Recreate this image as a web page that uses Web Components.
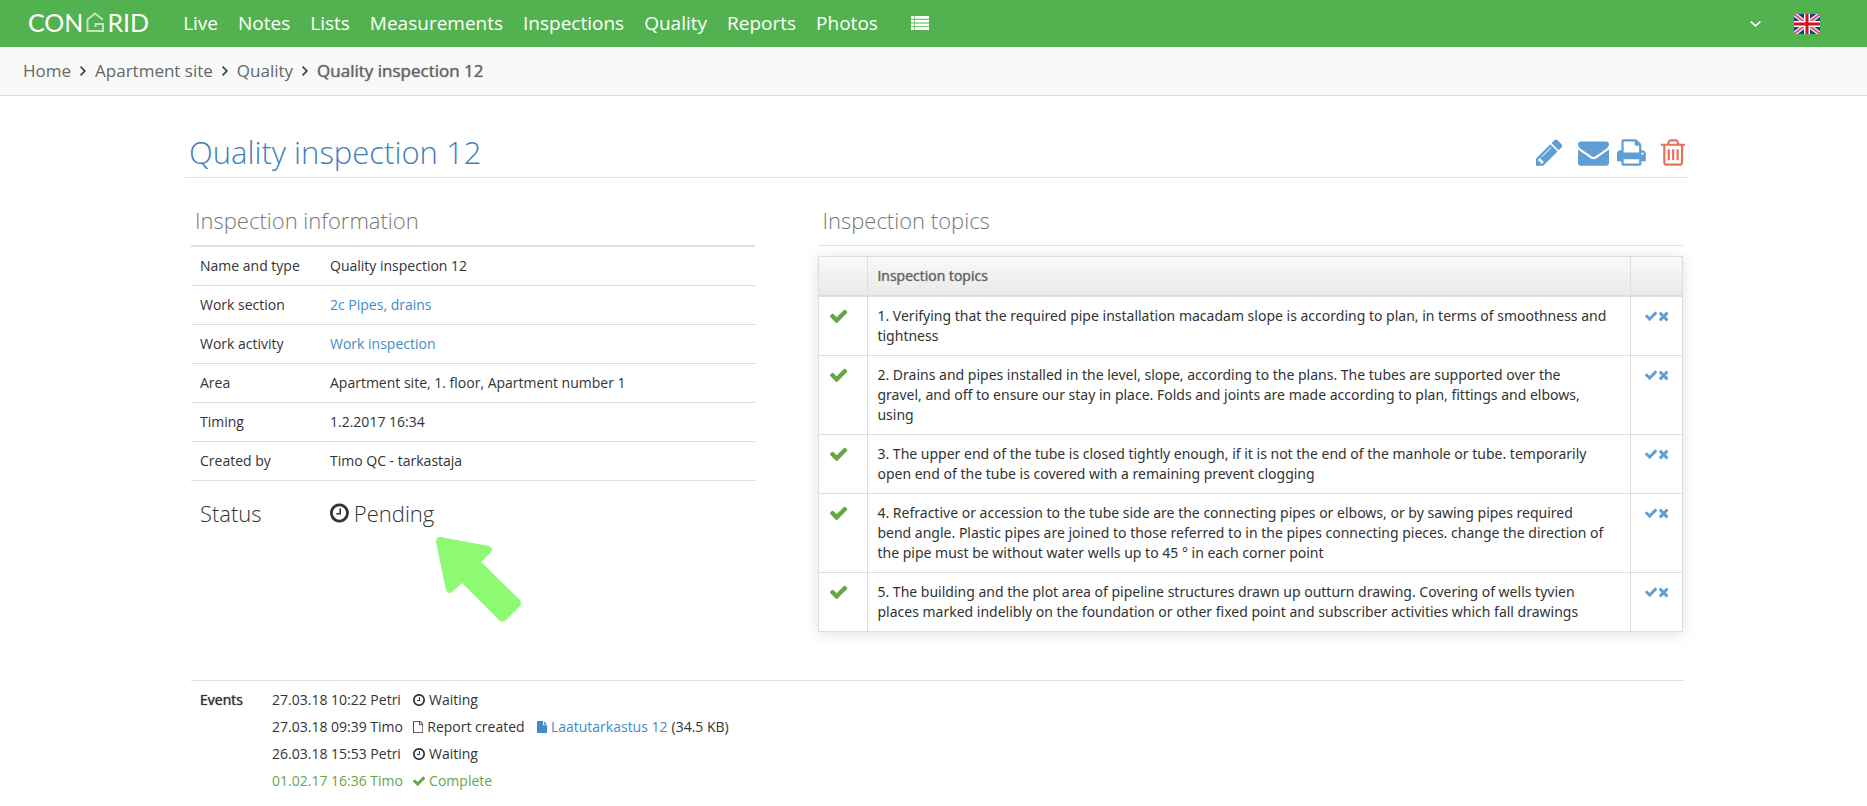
<!DOCTYPE html>
<html lang="en">
<head>
<meta charset="utf-8">
<title>Quality inspection 12</title>
<style>
    body {
        margin: 0;
        background-color: #fff;
        color: #333;
        font-family: 'Open Sans', 'Noto Sans', sans-serif;
        font-size: 14px;
        line-height: 20px;
    }

    main {
        padding: 36px 178px 16px 185px;
    }

    .columns {
        display: grid;
        grid-template-columns: 395fr 605fr;
        gap: 63px;
        margin: 27px 6px 48px;
    }

    event-log {
        margin: 0 6px;
    }
</style>
</head>
<body>
<site-header></site-header>
<bread-crumbs></bread-crumbs>
<main>
    <page-title>Quality inspection 12</page-title>
    <div class="columns">
        <page-section>
            <span slot="heading">Inspection information</span>
            <info-table></info-table>
        </page-section>
        <page-section>
            <span slot="heading">Inspection topics</span>
            <topics-table></topics-table>
        </page-section>
    </div>
    <event-log></event-log>
</main>

<script>
const icons = {
    check: ['121 0 1550 1792', 'M1671 566q0 40-28 68l-724 724-136 136q-28 28-68 28t-68-28l-136-136-362-362q-28-28-28-68t28-68l136-136q28-28 68-28t68 28l294 295 656-657q28-28 68-28t68 28l136 136q28 28 28 68z'],
    times: ['302 0 1188 1792', 'M1490 1322q0 40-28 68l-136 136q-28 28-68 28t-68-28l-294-294-294 294q-28 28-68 28t-68-28l-136-136q-28-28-28-68t28-68l294-294-294-294q-28-28-28-68t28-68l136-136q28-28 68-28t68 28l294 294 294-294q28-28 68-28t68 28l136 136q28 28 28 68t-28 68l-294 294 294 294q28 28 28 68z'],
    pencil: ['128 0 1536 1792', 'M491 1536l91-91-235-235-91 91v107h128v128h107zm523-928q0-22-22-22-10 0-17 7l-542 542q-7 7-7 17 0 22 22 22 10 0 17-7l542-542q7-7 7-17zm-54-192l416 416-832 832h-416v-416zm683 96q0 53-37 90l-166 166-416-416 166-165q36-38 90-38 53 0 91 38l235 234q37 39 37 91z'],
    envelope: ['0 0 1792 1792', 'M1792 710v794q0 66-47 113t-113 47h-1472q-66 0-113-47t-47-113v-794q44 49 101 87 362 246 497 345 57 42 92.5 65.5t94.5 48 110 24.5h2q51 0 110-24.5t94.5-48 92.5-65.5q170-123 498-345 57-39 100-87zm0-294q0 79-49 151t-122 123q-376 261-468 325-10 7-42.5 31t-54 38.5-52 32.5-57.5 27-50 9h-2q-23 0-50-9t-57.5-27-52-32.5-54-38.5-42.5-31q-91-64-262-182.5t-205-142.5q-62-42-117-115.5t-55-136.5q0-78 41.5-130t118.5-52h1472q65 0 112.5 47t47.5 113z'],
    print: ['64 0 1664 1792', 'M448 1536h896v-256h-896v256zm0-640h896v-384h-160q-40 0-68-28t-28-68v-160h-640v640zm1152 64q0-26-19-45t-45-19-45 19-19 45 19 45 45 19 45-19 19-45zm128 0v416q0 13-9.5 22.5t-22.5 9.5h-224v160q0 40-28 68t-68 28h-960q-40 0-68-28t-28-68v-160h-224q-13 0-22.5-9.5t-9.5-22.5v-416q0-79 56.5-135.5t135.5-56.5h64v-544q0-40 28-68t68-28h672q40 0 88 20t76 48l152 152q28 28 48 76t20 88v256h64q79 0 135.5 56.5t56.5 135.5z'],
    trash: ['192 0 1408 1792', 'M704 736v576q0 14-9 23t-23 9h-64q-14 0-23-9t-9-23v-576q0-14 9-23t23-9h64q14 0 23 9t9 23zm256 0v576q0 14-9 23t-23 9h-64q-14 0-23-9t-9-23v-576q0-14 9-23t23-9h64q14 0 23 9t9 23zm256 0v576q0 14-9 23t-23 9h-64q-14 0-23-9t-9-23v-576q0-14 9-23t23-9h64q14 0 23 9t9 23zm128 724v-948h-896v948q0 22 7 40.5t14.5 27 10.5 8.5h832q3 0 10.5-8.5t14.5-27 7-40.5zm-672-1076h448l-48-117q-7-9-17-11h-317q-10 2-17 11zm928 32v64q0 14-9 23t-23 9h-96v948q0 83-47 143.5t-113 60.5h-832q-66 0-113-58.5t-47-141.5v-952h-96q-14 0-23-9t-9-23v-64q0-14 9-23t23-9h309l70-167q15-37 54-63t79-26h320q40 0 79 26t54 63l70 167h309q14 0 23 9t9 23z'],
    clock: ['128 0 1536 1792', 'M1024 544v448q0 14-9 23t-23 9h-320q-14 0-23-9t-9-23v-64q0-14 9-23t23-9h224v-352q0-14 9-23t23-9h64q14 0 23 9t9 23zm416 352q0-148-73-273t-198-198-273-73-273 73-198 198-73 273 73 273 198 198 273 73 273-73 198-198 73-273zm224 0q0 209-103 385.5t-279.5 279.5-385.5 103-385.5-103-279.5-279.5-103-385.5 103-385.5 279.5-279.5 385.5-103 385.5 103 279.5 279.5 103 385.5z'],
    fileOutline: ['128 0 1536 1792', 'M1596 380q28 28 48 76t20 88v1152q0 40-28 68t-68 28h-1344q-40 0-68-28t-28-68v-1600q0-40 28-68t68-28h896q40 0 88 20t76 48zm-444-244v376h376q-10-29-22-41l-313-313q-12-12-41-22zm384 1528v-1024h-416q-40 0-68-28t-28-68v-416h-768v1536h1280z'],
    file: ['128 0 1536 1792', 'M1152 512v-472q22 14 36 28l408 408q14 14 28 36h-472zm-128 32q0 40 28 68t68 28h544v1056q0 40-28 68t-68 28h-1344q-40 0-68-28t-28-68v-1600q0-40 28-68t68-28h800v544z'],
    list: ['0 0 18 14', 'M0 0h3v2.8H0zM3.7 0H18v2.8H3.7zM0 3.7h3v2.8H0zM3.7 3.7H18v2.8H3.7zM0 7.4h3v2.8H0zM3.7 7.4H18v2.8H3.7zM0 11.1h3v2.9H0zM3.7 11.1H18v2.9H3.7z'],
    right: ['0 0 6 10', 'M1.2 0L6 5 1.2 10 0 8.8 3.6 5 0 1.2z'],
    down: ['0 0 11 6', 'M0 1.1L1.2 0l4.3 3.8L9.8 0 11 1.1 5.5 6z']
};

// glyph icon, as high as the font size of its place
class GlyphIcon extends HTMLElement {
    constructor() {
        super();
        this.attachShadow({ mode: 'open' });
    }

    connectedCallback() {
        const [viewBox, path] = icons[this.getAttribute('name')];
        this.shadowRoot.innerHTML = `
        <style>
            :host { display: block; line-height: 0; }
            svg { display: block; height: 1em; fill: currentColor; }
        </style>
        <svg viewBox="${viewBox}" aria-hidden="true"><path d="${path}"/></svg>
        `;
    }
}
customElements.define('glyph-icon', GlyphIcon);

class SiteHeader extends HTMLElement {
    constructor() {
        super();
        this.attachShadow({ mode: 'open' });
    }

    connectedCallback() {
        const links = ['Live', 'Notes', 'Lists', 'Measurements', 'Inspections', 'Quality', 'Reports', 'Photos'];

        this.shadowRoot.innerHTML = `
        <style>
            :host {
                display: flex;
                align-items: center;
                height: 47px;
                padding: 0 47px 0 28px;
                background-color: #53b250;
                color: #fff;
                font-size: 19px;
            }

            a { color: inherit; text-decoration: none; }

            .logo {
                display: flex;
                align-items: center;
                gap: 3px;
                margin-right: 34px;
                padding-bottom: 3px;
                font-family: Lato, sans-serif;
                font-size: 25px;
                line-height: 28px;
            }

            .logo svg { width: 18px; height: 20px; }

            nav {
                display: flex;
                align-items: center;
                gap: 20px;
                flex: 1;
                padding-bottom: 2px;
            }

            nav button { margin-left: 13px; font-size: 14px; }

            button {
                padding: 0;
                border: none;
                background: none;
                color: inherit;
                cursor: pointer;
            }

            .account { margin-right: 33px; font-size: 6px; }
            .language svg { display: block; width: 26px; height: 20px; }
        </style>
        <a class="logo" href="#" aria-label="Congrid">
            <span>CON</span>
            <svg viewBox="0 0 18 20" fill="none" stroke="#fff" stroke-opacity=".65" stroke-width="2">
                <path d="M16 8V7L9 1.5 1.5 7.5V19H17V12H9.500V15"/>
            </svg>
            <span>RID</span>
        </a>
        <nav>
            ${links.map(text => `<a href="#">${text}</a>`).join('')}
            <button aria-label="All lists"><glyph-icon name="list"></glyph-icon></button>
        </nav>
        <button class="account" aria-label="Account"><glyph-icon name="down"></glyph-icon></button>
        <button class="language" aria-label="Language">
            <svg viewBox="0 0 26 20">
                <path fill="#1a3a94" d="M0 0h26v20H0z"/>
                <path stroke="#f4eef2" stroke-width="4.500" d="M0 0l26 20M26 0L0 20"/>
                <path stroke="#dc5560" stroke-width="1.800" d="M0 0l26 20M26 0L0 20"/>
                <path fill="#fff" d="M10 0h6v20h-6zM0 7h26v6H0z"/>
                <path fill="#d6101c" d="M11.500 0h3v20h-3zM0 8.500h26v3H0z"/>
            </svg>
        </button>
        `;
    }
}
customElements.define('site-header', SiteHeader);

class BreadCrumbs extends HTMLElement {
    constructor() {
        super();
        this.attachShadow({ mode: 'open' });
    }

    connectedCallback() {
        const parents = ['Home', 'Apartment site', 'Quality'];

        this.shadowRoot.innerHTML = `
        <style>
            :host {
                display: block;
                padding: 0 23px;
                background-color: #f9f9f9;
                border-bottom: 1px solid #ddd;
                color: #666;
                font-size: 17px;
                line-height: 48px;
            }

            nav { display: flex; align-items: center; gap: 9px; }
            a { color: inherit; text-decoration: none; }
            glyph-icon { color: #444; font-size: 10px; }
            .current { text-shadow: 0 0 1px #666; }
        </style>
        <nav aria-label="Breadcrumb">
            ${parents.map(text => `<a href="#">${text}</a><glyph-icon name="right"></glyph-icon>`).join('')}
            <span class="current" aria-current="page">Quality inspection 12</span>
        </nav>
        `;
    }
}
customElements.define('bread-crumbs', BreadCrumbs);

class PageTitle extends HTMLElement {
    constructor() {
        super();
        this.attachShadow({ mode: 'open' });
    }

    connectedCallback() {
        this.shadowRoot.innerHTML = `
        <style>
            :host {
                display: flex;
                align-items: center;
                justify-content: space-between;
                padding: 0 4px 5px;
                border-bottom: 1px solid #dde5ec;
            }

            h1 {
                margin: 0;
                color: #3f7fb8;
                font-size: 31px;
                font-weight: 300;
                line-height: 40px;
            }

            .actions { display: flex; gap: 15px; }
            .pair { display: flex; gap: 8px; }

            button {
                padding: 0;
                border: none;
                background: none;
                color: #5f9fd6;
                font-size: 31px;
                cursor: pointer;
            }

            .delete { color: #e8705f; }
        </style>
        <h1><slot></slot></h1>
        <div class="actions">
            <button aria-label="Edit"><glyph-icon name="pencil"></glyph-icon></button>
            <div class="pair">
                <button aria-label="Send"><glyph-icon name="envelope"></glyph-icon></button>
                <button aria-label="Print"><glyph-icon name="print"></glyph-icon></button>
            </div>
            <button class="delete" aria-label="Delete"><glyph-icon name="trash"></glyph-icon></button>
        </div>
        `;
    }
}
customElements.define('page-title', PageTitle);

class PageSection extends HTMLElement {
    constructor() {
        super();
        this.attachShadow({ mode: 'open' });
    }

    connectedCallback() {
        this.shadowRoot.innerHTML = `
        <style>
            :host { display: block; }

            h2 {
                margin: 0;
                padding: 0 4px 10px;
                border-bottom: 1px solid #dde5ec;
                color: #777;
                font-size: 22px;
                font-weight: 300;
                line-height: 30px;
            }
        </style>
        <h2><slot name="heading"></slot></h2>
        <slot></slot>
        `;
    }
}
customElements.define('page-section', PageSection);

class InfoTable extends HTMLElement {
    constructor() {
        super();
        this.attachShadow({ mode: 'open' });
    }

    connectedCallback() {
        const rows = [
            { label: 'Name and type', value: 'Quality inspection 12' },
            { label: 'Work section', value: '2c Pipes, drains', link: true },
            { label: 'Work activity', value: 'Work inspection', link: true },
            { label: 'Area', value: 'Apartment site, 1. floor, Apartment number 1' },
            { label: 'Timing', value: '1.2.2017 16:34' },
            { label: 'Created by', value: 'Timo QC - tarkastaja' }
        ];

        this.shadowRoot.innerHTML = `
        <style>
            :host { display: block; }

            table { width: 100%; border-spacing: 0; }

            th, td {
                padding: 9px;
                border-top: 1px solid #ddd;
                font-weight: 400;
                text-align: left;
            }

            th { width: 112px; }
            a { color: #428bca; text-decoration: none; }

            .status th, .status td {
                padding-top: 17px;
                font-size: 22px;
                font-weight: 300;
                line-height: 30px;
            }

            .state { display: flex; align-items: center; gap: 5px; position: relative; }

            /* pointer that lies over the page, below the state */
            .pointer {
                position: absolute;
                left: 105px;
                top: 39px;
                width: 87px;
                height: 86px;
                fill: #8ef972;
            }
        </style>
        <table>
            ${rows.map(row => `
            <tr>
                <th scope="row">${row.label}</th>
                <td>${row.link ? `<a href="#">${row.value}</a>` : row.value}</td>
            </tr>`).join('')}
            <tr class="status">
                <th scope="row">Status</th>
                <td>
                    <div class="state">
                        <glyph-icon name="clock"></glyph-icon>
                        <span>Pending</span>
                        <svg class="pointer" viewBox="0 0 87 86" aria-hidden="true">
                            <path d="M5 0L54 9Q59 11 56 15L46 25 85 63Q87 66 85 69L70 84Q67 86 64 83L27 46 17 55Q13 58 11 53L1 5Q1 0 5 0z"/>
                        </svg>
                    </div>
                </td>
            </tr>
        </table>
        `;
    }
}
customElements.define('info-table', InfoTable);

class TopicsTable extends HTMLElement {
    constructor() {
        super();
        this.attachShadow({ mode: 'open' });
    }

    connectedCallback() {
        const topics = [
            '1. Verifying that the required pipe installation macadam slope is according to plan, in terms of smoothness and\ntightness',
            '2. Drains and pipes installed in the level, slope, according to the plans. The tubes are supported over the\ngravel, and off to ensure our stay in place. Folds and joints are made according to plan, fittings and elbows,\nusing',
            '3. The upper end of the tube is closed tightly enough, if it is not the end of the manhole or tube. temporarily\nopen end of the tube is covered with a remaining prevent clogging',
            '4. Refractive or accession to the tube side are the connecting pipes or elbows, or by sawing pipes required\nbend angle. Plastic pipes are joined to those referred to in the pipes connecting pieces. change the direction of\nthe pipe must be without water wells up to 45 ° in each corner point',
            '5. The building and the plot area of pipeline structures drawn up outturn drawing. Covering of wells tyvien\nplaces marked indelibly on the foundation or other fixed point and subscriber activities which fall drawings'
        ];

        this.shadowRoot.innerHTML = `
        <style>
            :host { display: block; margin-top: 10px; }

            table {
                width: 100%;
                border: 1px solid #ddd;
                border-width: 1px 0 0 1px;
                border-spacing: 0;
                box-shadow: 0 2px 14px rgba(0, 0, 0, 0.12);
            }

            th, td {
                padding: 9px;
                border-right: 1px solid #ddd;
                border-bottom: 1px solid #ddd;
                text-align: left;
                vertical-align: top;
            }

            thead tr { background: linear-gradient(#f9f9f9, #e9e9e9); }

            th {
                border-bottom-width: 2px;
                color: #666;
                font-weight: 400;
                text-shadow: 0 0 1px #666;
            }

            .topic { font-family: 'Noto Sans', sans-serif; white-space: pre-line; }
            .mark { width: 28px; padding-left: 11px; }
            .mark glyph-icon { color: #64a846; font-size: 20px; }
            .choice { width: 24px; padding-left: 14px; padding-right: 13px; }
            .buttons { display: flex; align-items: center; gap: 2px; height: 20px; }

            button {
                padding: 0;
                border: none;
                background: none;
                color: #5f9fd6;
                font-size: 14px;
                cursor: pointer;
            }
        </style>
        <table>
            <thead>
                <tr><th class="mark"></th><th scope="col">Inspection topics</th><th class="choice"></th></tr>
            </thead>
            <tbody>
                ${topics.map(topic => `
                <tr>
                    <td class="mark"><glyph-icon name="check"></glyph-icon></td>
                    <td class="topic">${topic}</td>
                    <td class="choice">
                        <div class="buttons">
                            <button aria-label="Accept"><glyph-icon name="check"></glyph-icon></button>
                            <button aria-label="Reject"><glyph-icon name="times"></glyph-icon></button>
                        </div>
                    </td>
                </tr>`).join('')}
            </tbody>
        </table>
        `;
    }
}
customElements.define('topics-table', TopicsTable);

class EventLog extends HTMLElement {
    constructor() {
        super();
        this.attachShadow({ mode: 'open' });
    }

    connectedCallback() {
        const events = [
            { when: '27.03.18 10:22 Petri', icon: 'clock', text: 'Waiting' },
            { when: '27.03.18 09:39 Timo', icon: 'fileOutline', text: 'Report created', file: 'Laatutarkastus 12', size: '(34.5 KB)' },
            { when: '26.03.18 15:53 Petri', icon: 'clock', text: 'Waiting' },
            { when: '01.02.17 16:36 Timo', icon: 'check', text: 'Complete', done: true }
        ];

        this.shadowRoot.innerHTML = `
        <style>
            :host {
                display: flex;
                padding: 5px 9px;
                border-top: 1px solid #ddd;
                line-height: 27px;
            }

            h3 {
                width: 72px;
                margin: 0;
                font-size: 14px;
                font-weight: 400;
                text-shadow: 0 0 1px #333;
            }

            ul { margin: 0; padding: 0; list-style: none; }
            li { display: flex; align-items: center; gap: 4px; }
            .when { width: 137px; }
            .done { color: #64a846; }

            a {
                display: flex;
                align-items: center;
                gap: 4px;
                margin-left: 8px;
                color: #428bca;
                text-decoration: none;
            }

            glyph-icon[name^="file"] { font-size: 12px; }
        </style>
        <h3>Events</h3>
        <ul>
            ${events.map(event => `
            <li class="${event.done ? 'done' : ''}">
                <span class="when">${event.when}</span>
                <glyph-icon name="${event.icon}"></glyph-icon>
                <span>${event.text}</span>
                ${event.file ? `<a href="#"><glyph-icon name="file"></glyph-icon>${event.file}</a><span>${event.size}</span>` : ''}
            </li>`).join('')}
        </ul>
        `;
    }
}
customElements.define('event-log', EventLog);
</script>
</body>
</html>
